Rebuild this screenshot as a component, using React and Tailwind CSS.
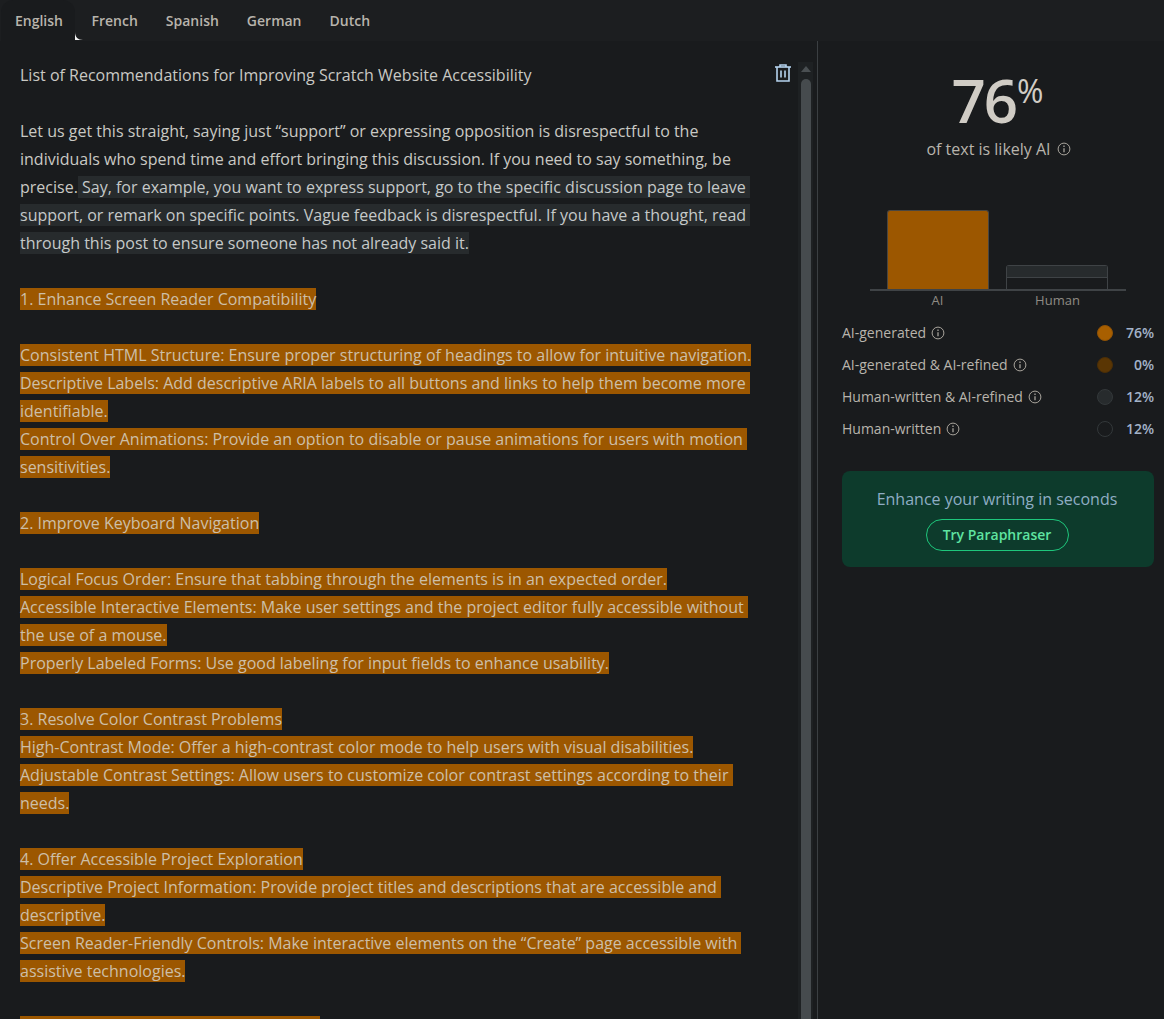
import React from "react";

const tabs = ["English", "French", "Spanish", "German", "Dutch"];

// one entry per rendered line, wrapped the way the reference wraps
const lines = [
    { text: "List of Recommendations for Improving Scratch Website Accessibility" },
    {},
    { text: "Let us get this straight, saying just “support” or expressing opposition is disrespectful to the" },
    { text: "individuals who spend time and effort bringing this discussion. If you need to say something, be" },
    { text: "precise.", grey: " Say, for example, you want to express support, go to the specific discussion page to leave " },
    { grey: "support, or remark on specific points. Vague feedback is disrespectful. If you have a thought, read " },
    { grey: "through this post to ensure someone has not already said it." },
    {},
    { orange: "1. Enhance Screen Reader Compatibility" },
    {},
    { orange: "Consistent HTML Structure: Ensure proper structuring of headings to allow for intuitive navigation." },
    { orange: "Descriptive Labels: Add descriptive ARIA labels to all buttons and links to help them become more " },
    { orange: "identifiable." },
    { orange: "Control Over Animations: Provide an option to disable or pause animations for users with motion " },
    { orange: "sensitivities." },
    {},
    { orange: "2. Improve Keyboard Navigation" },
    {},
    { orange: "Logical Focus Order: Ensure that tabbing through the elements is in an expected order." },
    { orange: "Accessible Interactive Elements: Make user settings and the project editor fully accessible without " },
    { orange: "the use of a mouse." },
    { orange: "Properly Labeled Forms: Use good labeling for input fields to enhance usability." },
    {},
    { orange: "3. Resolve Color Contrast Problems" },
    { orange: "High-Contrast Mode: Offer a high-contrast color mode to help users with visual disabilities." },
    { orange: "Adjustable Contrast Settings: Allow users to customize color contrast settings according to their " },
    { orange: "needs." },
    {},
    { orange: "4. Offer Accessible Project Exploration" },
    { orange: "Descriptive Project Information: Provide project titles and descriptions that are accessible and " },
    { orange: "descriptive." },
    { orange: "Screen Reader-Friendly Controls: Make interactive elements on the “Create” page accessible with " },
    { orange: "assistive technologies." },
    {},
];

const stats = [
    { label: "AI-generated", dot: "bg-[#a85f00] border-[#8f5206]", value: "76%" },
    { label: "AI-generated & AI-refined", dot: "bg-[#5a3604] border-[#4a2e08]", value: "0%" },
    { label: "Human-written & AI-refined", dot: "bg-[#272b2d] border-[#33383a]", value: "12%" },
    { label: "Human-written", dot: "bg-[#191b1d] border-[#33383a]", value: "12%" },
];

function InfoIcon({ className }) {
    return (
        <svg viewBox="0 0 14 14" fill="none" stroke="currentColor" className={className}>
            <circle cx="7" cy="7" r="5.9" strokeWidth="1" />
            <path d="M7 6.2v4" strokeWidth="1.3" />
            <path d="M7 3.6v1.3" strokeWidth="1.3" />
        </svg>
    );
}

function TrashIcon({ className }) {
    return (
        <svg viewBox="0 0 16 18" fill="none" stroke="currentColor" strokeWidth="1.6" className={className}>
            <path d="M0 3h16" />
            <path d="M5 3V1h6v2" />
            <path d="M2 3v14h12V3" />
            <path d="M6 6.5v7M10 6.5v7" />
        </svg>
    );
}

export default function App() {
    return (
        <div className="relative h-screen w-full overflow-hidden bg-[#191b1d] font-['Open_Sans','Noto_Sans',sans-serif] text-[#c9c5be]">
            {/* Language tabs */}
            <div className="flex h-[41px] items-start gap-[28px] bg-[#1c1e20] pl-[1px]">
                {tabs.map((t, i) => (
                    <div
                        key={t}
                        className={
                            i === 0
                                ? "-mr-[11.5px] h-[41px] w-[74px] rounded-t-xl bg-[#191b1d] pt-[11px] pl-[14px] text-sm font-semibold leading-[20px] text-[#b8b4ac]"
                                : "h-[41px] pt-[11px] text-sm font-semibold leading-[20px] text-[#b8b4ac]"
                        }
                    >
                        {t}
                    </div>
                ))}
            </div>
            {/* little white corner artefact next to the active tab */}
            <svg viewBox="0 0 9 9" className="absolute top-[32px] left-[75px] h-[9px] w-[9px]">
                <path d="M0 0C0 5 3 8 8 8H0Z" fill="#f4f4f4" />
            </svg>

            <div className="flex h-[978px]">
                {/* Text panel */}
                <div className="relative w-[818px] shrink-0 border-r border-[#3b3f42]">
                    <div className="pt-[20px] pl-[20px] text-base leading-[28px] whitespace-pre text-[#c9c9c4]">
                        {lines.map((l, i) => (
                            <div key={i} className="h-[28px]">
                                {l.text}
                                {l.grey && (
                                    <span className="bg-[#272b2d] text-[#c5c9c9]">{l.grey}</span>
                                )}
                                {l.orange && (
                                    <span className="bg-[#9c5700] text-[#cdbfa8]">{l.orange}</span>
                                )}
                            </div>
                        ))}
                        {/* next heading, only the top of its highlight shows above the fold */}
                        <div className="mt-[3px] h-[22px] w-[300px] bg-[#9c5700]" />
                    </div>

                    <TrashIcon className="absolute top-[23px] left-[775px] h-[18px] w-[16px] text-[#b5d3ee]" />

                    {/* Scrollbar */}
                    <div className="absolute top-[21px] right-[4px] bottom-0 flex w-[15px] flex-col items-center bg-[#1e2123]">
                        <div className="mt-[4px] h-0 w-0 border-x-[5px] border-b-[6px] border-x-transparent border-b-[#4a4f52]" />
                        <div className="mt-[7px] w-[10px] flex-1 rounded-t-full bg-[#464b4e]" />
                    </div>
                </div>

                {/* Results panel */}
                <div className="flex-1 pt-[27px] pr-[10px] pl-[24px]">
                    <div className="flex items-start justify-center pr-[1px] text-[#d0ccc5]">
                        <span className="text-[60px] leading-[64px] font-semibold tracking-[-2px]">76</span>
                        <span className="mt-[3px] ml-[1px] text-[32px] leading-[40px] font-medium">%</span>
                    </div>
                    <div className="mt-[5px] flex items-center justify-center gap-[6px] pl-[1px] text-base leading-[24px] text-[#b8b4ac]">
                        of text is likely AI
                        <InfoIcon className="h-[14px] w-[14px] text-[#a8a49c]" />
                    </div>

                    {/* Bar chart */}
                    <div className="mt-[49px] ml-[28px] box-content flex h-[79px] w-[239px] items-end gap-[17px] border-b-2 border-[#3f4346] pl-[17px]">
                        <div className="h-[79px] w-[102px] rounded-t-[3px] border border-b-0 border-[#4a4640] bg-[#9c5700]" />
                        <div className="flex h-[24px] w-[102px] flex-col rounded-t-[3px] border border-b-0 border-[#3f4346]">
                            <div className="h-[12px] border-b border-[#3f4346] bg-[#272b2d]" />
                        </div>
                    </div>
                    <div className="ml-[27px] flex w-[256px] justify-center gap-[18px] pl-[1px] text-[13px] leading-[18px] text-[#8f8b84]">
                        <div className="w-[102px] text-center">AI</div>
                        <div className="w-[102px] text-center">Human</div>
                    </div>

                    {/* Breakdown */}
                    <div className="mt-[14px] flex flex-col gap-[12px]">
                        {stats.map((s) => (
                            <div key={s.label} className="flex h-[20px] items-center text-sm leading-[20px] text-[#b8b4ac]">
                                <span>{s.label}</span>
                                <InfoIcon className="ml-[5px] h-[14px] w-[14px] text-[#a8a49c]" />
                                <span className={`ml-auto h-[16px] w-[16px] rounded-full border ${s.dot}`} />
                                <span className="w-[41px] text-right text-sm font-semibold text-[#a3b3c9]">{s.value}</span>
                            </div>
                        ))}
                    </div>

                    {/* Paraphraser promo */}
                    <div className="mt-[32px] flex h-[96px] flex-col items-center rounded-lg bg-[#0d3b2c] pt-[16px] pr-[2px]">
                        <div className="text-base leading-[24px] text-[#8fadc4]">Enhance your writing in seconds</div>
                        <div className="mt-[8px] flex h-[32px] w-[143px] items-center justify-center rounded-full border border-[#1ec77c] text-sm font-semibold text-[#5fe3a1]">
                            Try Paraphraser
                        </div>
                    </div>
                </div>
            </div>
        </div>
    );
}
